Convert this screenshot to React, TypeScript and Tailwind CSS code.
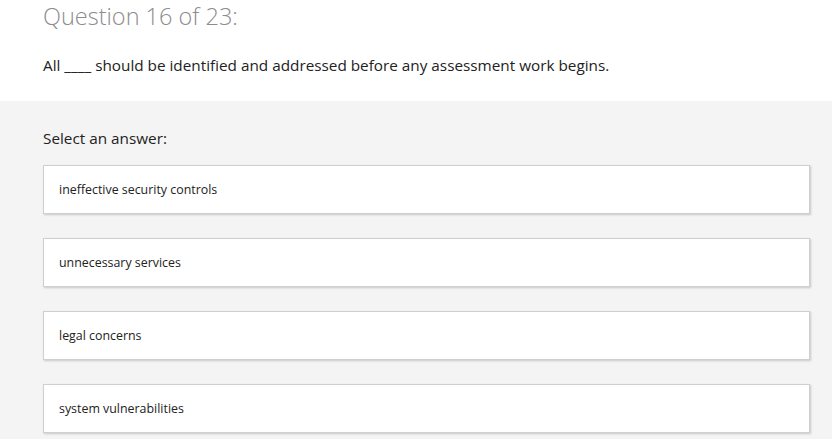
const answers = [
  'ineffective security controls',
  'unnecessary services',
  'legal concerns',
  'system vulnerabilities',
];

export default function App() {
  return (
    <div className="min-h-screen bg-white font-['Segoe_UI','Open_Sans',sans-serif] text-[#222]">
      <div className="pl-[43px] pr-[22px] pt-[1px] pb-[26px]">
        <h1 className="text-[23.5px] font-light leading-[30px] text-[#8c8c8c]">Question 16 of 23:</h1>
        <p className="mt-[24px] text-[15.3px] leading-[20px]">All ____ should be identified and addressed before any assessment work begins.</p>
      </div>
      <div className="bg-[#f4f4f4] pl-[43px] pr-[22px] pt-[27px] pb-[6px]">
        <p className="text-[15.3px] leading-[20px] text-[#222]">Select an answer:</p>
        <ul className="mt-[17px] flex flex-col gap-[24px]">
          {answers.map((a) => (
            <li
              key={a}
              className="flex h-[49px] items-center border border-[#cfcfcf] bg-white px-[15px] pt-[2px] text-[12.4px] shadow-[1px_1px_2px_rgba(0,0,0,0.18)]"
            >
              {a}
            </li>
          ))}
        </ul>
      </div>
    </div>
  );
}
